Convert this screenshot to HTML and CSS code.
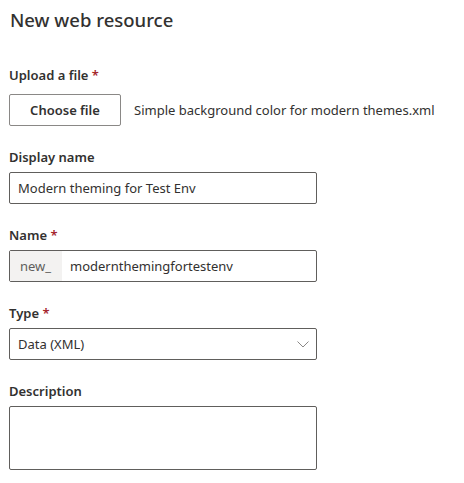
FILE: index.html
```html
<!DOCTYPE html>
<html lang="en">
<head>
    <meta charset="UTF-8">
    <title>New web resource</title>
    <link rel="stylesheet" href="styles.css">
</head>
<body>
    <div class="panel">
        <h1>New web resource</h1>

        <div class="field">
            <label class="upload-label">Upload a file <span class="req">*</span></label>
            <div class="upload-row">
                <button class="choose-btn">Choose file</button>
                <span class="file-name">Simple background color for modern themes.xml</span>
            </div>
        </div>

        <div class="field">
            <label>Display name</label>
            <div class="input">Modern theming for Test Env</div>
        </div>

        <div class="field">
            <label>Name <span class="req">*</span></label>
            <div class="input prefixed">
                <span class="prefix">new_</span>
                <span class="value">modernthemingfortestenv</span>
            </div>
        </div>

        <div class="field">
            <label>Type <span class="req">*</span></label>
            <div class="input dropdown">
                <span>Data (XML)</span>
                <svg class="chevron" width="12" height="7" viewBox="0 0 12 7">
                    <path d="M0.5 0.5 L6 6 L11.5 0.5" fill="none" stroke="#8a8886" stroke-width="1"/>
                </svg>
            </div>
        </div>

        <div class="field">
            <label>Description</label>
            <div class="textarea"></div>
        </div>
    </div>
</body>
</html>
```

FILE: styles.css
```css
body {
    margin: 0;
    background: #ffffff;
    font-family: "Segoe UI", "Noto Sans", "Liberation Sans", sans-serif;
    color: #323130;
    font-size: 13px;
}
.panel {
    padding: 6px 9px 0 9px;
}
h1 {
    margin: 0 0 31px 1px;
    font-size: 18.5px;
    line-height: 28px;
    font-weight: 500;
}
.field {
    width: 308px;
    margin-bottom: 21px;
}
label {
    display: block;
    font-weight: 600;
    line-height: 20px;
    margin-bottom: 5px;
}
.upload-label {
    margin-bottom: 9px;
}
.req {
    color: #a4262c;
}
.upload-row {
    display: flex;
    align-items: center;
    white-space: nowrap;
}
.choose-btn {
    flex-shrink: 0;
    height: 32px;
    width: 112px;
    background: #ffffff;
    border: 1px solid #8a8886;
    border-radius: 2px;
    font-family: inherit;
    font-size: 13px;
    font-weight: 600;
    color: #323130;
    padding: 0;
}
.file-name {
    margin-left: 13px;
}
.input {
    box-sizing: border-box;
    height: 32px;
    border: 1px solid #605e5c;
    border-radius: 2px;
    display: flex;
    align-items: center;
    padding: 0 8px;
}
.prefixed {
    padding: 0;
}
.prefix {
    background: #f3f2f1;
    color: #605e5c;
    align-self: stretch;
    display: flex;
    align-items: center;
    padding: 0 10px;
    width: 52px;
    box-sizing: border-box;
}
.value {
    padding-left: 8px;
}
.dropdown {
    justify-content: space-between;
    padding-right: 7px;
}
.textarea {
    box-sizing: border-box;
    height: 64px;
    border: 1px solid #605e5c;
    border-radius: 2px;
}
```
